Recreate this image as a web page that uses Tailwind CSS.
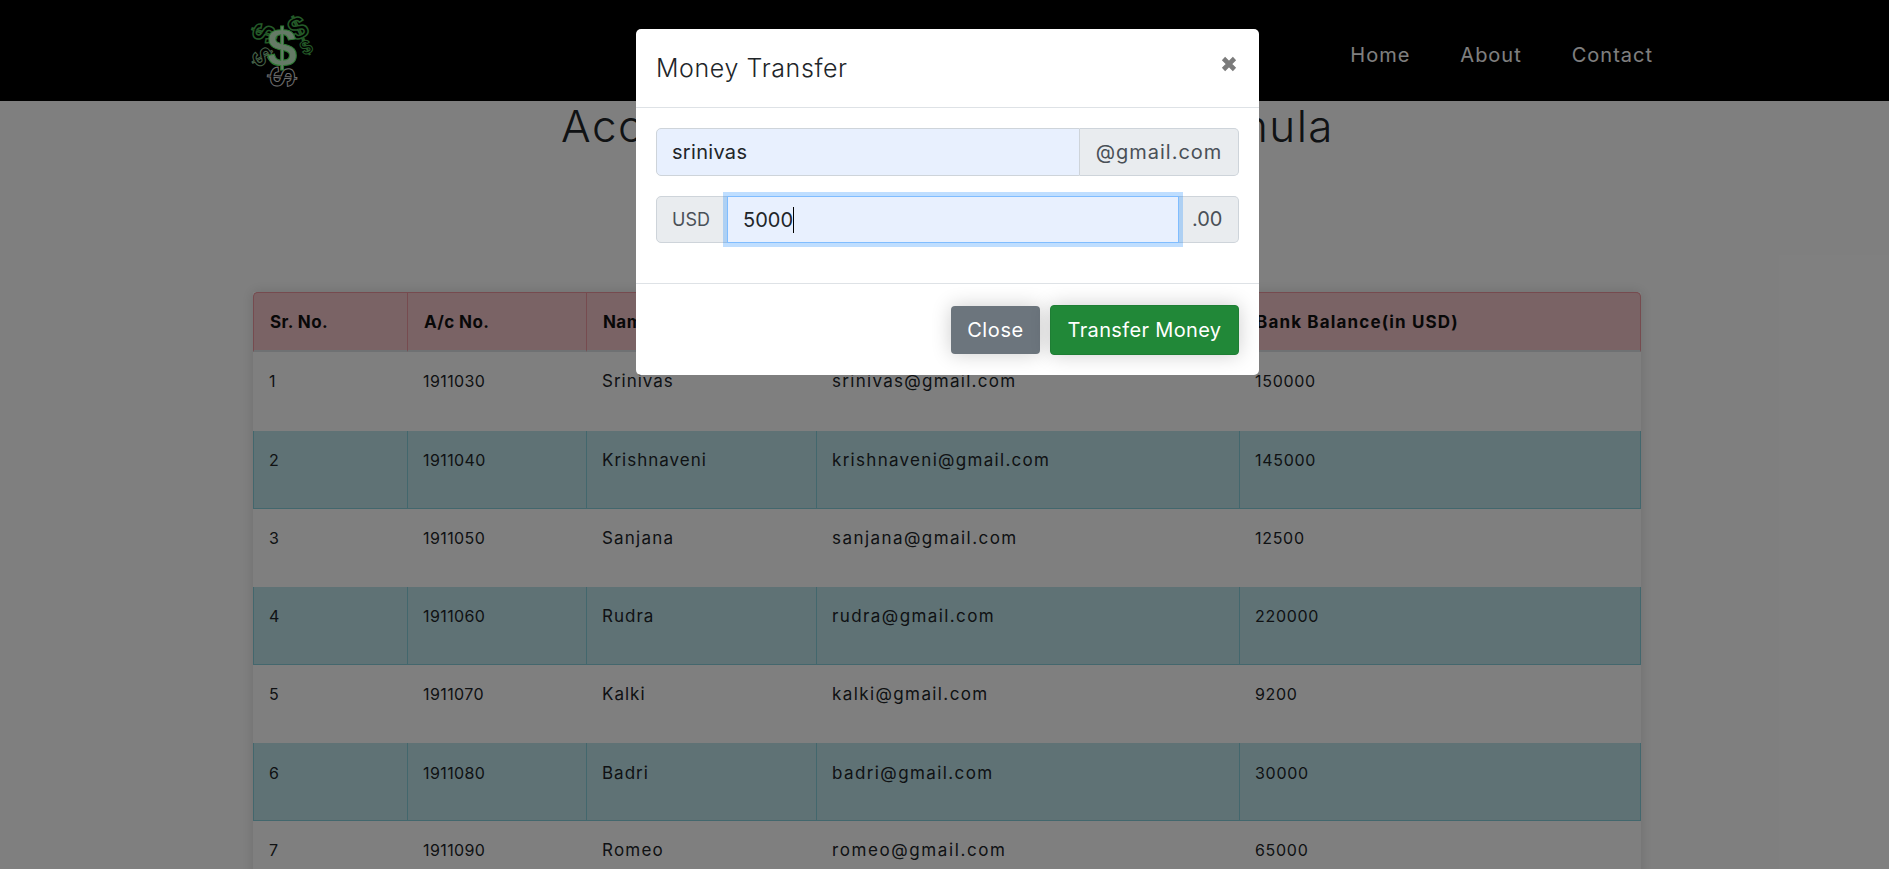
<!DOCTYPE html>
<html><head><meta charset="utf-8"><script src="https://cdn.jsdelivr.net/npm/@tailwindcss/browser@4"></script></head>
<body class="relative h-[869px] overflow-hidden bg-white font-['Inter','Liberation_Sans',sans-serif] text-[#212529]">
<nav class="h-[101px] bg-black flex justify-between pl-[240px] pr-[236px]">
  <div class="relative w-[90px] h-[90px] mt-[5px] overflow-hidden font-['Liberation_Sans',sans-serif] font-bold">
    <span class="absolute left-[4px] top-[8px] w-10 h-10 flex items-center justify-center -rotate-70 text-[32px] text-transparent [-webkit-text-stroke:1.5px_#48b450]">$</span>
    <span class="absolute left-[38px] top-[3px] w-10 h-10 flex items-center justify-center -rotate-25 text-[32px] text-transparent [-webkit-text-stroke:1.5px_#48b450]">$</span>
    <span class="absolute left-[46px] top-[22px] w-10 h-10 flex items-center justify-center -rotate-25 text-[20px] text-transparent [-webkit-text-stroke:1px_#48b450]">$</span>
    <span class="absolute left-[2px] top-[32px] w-10 h-10 flex items-center justify-center rotate-60 text-[28px] text-transparent [-webkit-text-stroke:1px_#90c894]">$</span>
    <span class="absolute left-[22px] top-[52px] w-10 h-10 flex items-center justify-center rotate-95 text-[36px] text-transparent [-webkit-text-stroke:1px_#dddddd]">$</span>
    <span class="absolute left-[22px] top-[22px] w-10 h-10 flex items-center justify-center text-[54px] text-[#c8f5cc] [-webkit-text-stroke:1px_#5af466]">$</span>
  </div>
  <ul class="flex gap-[50px] pt-[41px] text-[20px] leading-[28px] tracking-[1px] text-white">
    <li>Home</li><li>About</li><li>Contact</li>
  </ul>
</nav>
<main class="px-[253px]">
  <h1 class="text-center pl-[6px] text-[44px] leading-[50px] font-light tracking-[1.4px] mb-[141px]">Accounts Details of Money Formula</h1>
  <table class="w-[1388px] table-fixed border-separate border-spacing-0 text-[17px] shadow-[0_0_12px_rgba(0,0,0,0.15)]">
    <colgroup><col class="w-[154px]"><col class="w-[179px]"><col class="w-[230px]"><col class="w-[423px]"><col></colgroup>
    <thead class="bg-[#f5c6cb] text-left font-bold text-[#111]">
      <tr class="h-[60px]">
        <th class="border-t border-l border-b-2 border-[#ed969e] border-b-[#dee2e6] pl-4 pt-[2px] tracking-[0.4px] rounded-tl-[5px]">Sr. No.</th>
        <th class="border-t border-l border-b-2 border-[#ed969e] border-b-[#dee2e6] pl-4 pt-[2px] tracking-[0.4px]">A/c No.</th>
        <th class="border-t border-l border-b-2 border-[#ed969e] border-b-[#dee2e6] pl-4 pt-[2px] tracking-[0.4px]">Name</th>
        <th class="border-t border-l border-b-2 border-[#ed969e] border-b-[#dee2e6] pl-4 pt-[2px] tracking-[0.4px]">Email</th>
        <th class="border-t border-x border-b-2 border-[#ed969e] border-b-[#dee2e6] pl-4 pt-[2px] tracking-[1.15px] rounded-tr-[5px]">Bank Balance(in USD)</th>
      </tr>
    </thead>
    <tbody class="align-top leading-6">
      <tr class="h-[79px] bg-white"><td class="pt-[17px] pl-4 text-[16px]">1</td><td class="pt-[17px] pl-4 text-[16px] tracking-[0.4px]">1911030</td><td class="pt-[17px] pl-4 tracking-[1px]">Srinivas</td><td class="pt-[17px] pl-4 tracking-[1.3px]">srinivas@gmail.com</td><td class="pt-[17px] pl-4 text-[16px] tracking-[0.7px]">150000</td></tr>
      <tr class="h-[78px] bg-[#bee5eb]"><td class="pt-[17px] pl-[15px] text-[16px] border-l border-b border-[#86cfda]">2</td><td class="pt-[17px] pl-[15px] text-[16px] tracking-[0.4px] border-l border-b border-[#86cfda]">1911040</td><td class="pt-[17px] pl-[15px] tracking-[1px] border-l border-b border-[#86cfda]">Krishnaveni</td><td class="pt-[17px] pl-[15px] tracking-[1.3px] border-l border-b border-[#86cfda]">krishnaveni@gmail.com</td><td class="pt-[17px] pl-[15px] text-[16px] tracking-[0.7px] border-x border-b border-[#86cfda]">145000</td></tr>
      <tr class="h-[78px] bg-white"><td class="pt-[17px] pl-4 text-[16px]">3</td><td class="pt-[17px] pl-4 text-[16px] tracking-[0.4px]">1911050</td><td class="pt-[17px] pl-4 tracking-[1.2px]">Sanjana</td><td class="pt-[17px] pl-4 tracking-[1.45px]">sanjana@gmail.com</td><td class="pt-[17px] pl-4 text-[16px] tracking-[0.7px]">12500</td></tr>
      <tr class="h-[78px] bg-[#bee5eb]"><td class="pt-[17px] pl-[15px] text-[16px] border-l border-b border-[#86cfda]">4</td><td class="pt-[17px] pl-[15px] text-[16px] tracking-[0.4px] border-l border-b border-[#86cfda]">1911060</td><td class="pt-[17px] pl-[15px] tracking-[1px] border-l border-b border-[#86cfda]">Rudra</td><td class="pt-[17px] pl-[15px] tracking-[1.4px] border-l border-b border-[#86cfda]">rudra@gmail.com</td><td class="pt-[17px] pl-[15px] text-[16px] tracking-[0.7px] border-x border-b border-[#86cfda]">220000</td></tr>
      <tr class="h-[78px] bg-white"><td class="pt-[17px] pl-4 text-[16px]">5</td><td class="pt-[17px] pl-4 text-[16px] tracking-[0.4px]">1911070</td><td class="pt-[17px] pl-4 tracking-[1px]">Kalki</td><td class="pt-[17px] pl-4 tracking-[1.4px]">kalki@gmail.com</td><td class="pt-[17px] pl-4 text-[16px] tracking-[0.7px]">9200</td></tr>
      <tr class="h-[78px] bg-[#bee5eb]"><td class="pt-[18px] pl-[15px] text-[16px] border-l border-b border-[#86cfda]">6</td><td class="pt-[18px] pl-[15px] text-[16px] tracking-[0.4px] border-l border-b border-[#86cfda]">1911080</td><td class="pt-[18px] pl-[15px] tracking-[1px] border-l border-b border-[#86cfda]">Badri</td><td class="pt-[18px] pl-[15px] tracking-[1.4px] border-l border-b border-[#86cfda]">badri@gmail.com</td><td class="pt-[18px] pl-[15px] text-[16px] tracking-[0.7px] border-x border-b border-[#86cfda]">30000</td></tr>
      <tr class="h-[79px] bg-white"><td class="pt-[17px] pl-4 text-[16px]">7</td><td class="pt-[17px] pl-4 text-[16px] tracking-[0.4px]">1911090</td><td class="pt-[17px] pl-4 tracking-[1.2px]">Romeo</td><td class="pt-[17px] pl-4 tracking-[1.6px]">romeo@gmail.com</td><td class="pt-[17px] pl-4 text-[16px] tracking-[0.7px]">65000</td></tr>
    </tbody>
  </table>
</main>
<div class="absolute inset-0 bg-black/50"></div>
<div class="absolute left-[636px] top-[29px] w-[623px] h-[346px] bg-white rounded-[5px] flex flex-col">
  <div class="h-[79px] border-b border-[#dee2e6] flex justify-between pl-5 pr-[20px] shrink-0">
    <h5 class="pt-[21px] text-[25px] leading-[36px] font-light tracking-[0.6px]">Money Transfer</h5>
    <svg class="mt-[27px] mr-[2px] w-[16px] h-[16px] text-[#7b7b7b]" viewBox="0 0 16 16" fill="none" stroke="currentColor" stroke-width="4.6"><path d="M2.5 2.5 13.5 13.5M13.5 2.5 2.5 13.5"/></svg>
  </div>
  <div class="h-[176px] border-b border-[#dee2e6] px-5 pt-5 shrink-0 text-[20px]">
    <div class="flex h-[48px] mb-5">
      <div class="flex-1 bg-[#e8f0fe] border border-[#ced4da] rounded-l-[5px] pl-[15px] leading-[46px] tracking-[0.3px]">srinivas</div>
      <div class="w-[159px] bg-[#e9ecef] border border-l-0 border-[#ced4da] rounded-r-[5px] text-center leading-[46px] tracking-[1px] text-[#495057]">@gmail.com</div>
    </div>
    <div class="flex h-[47px]">
      <div class="w-[72px] bg-[#e9ecef] border border-[#ced4da] rounded-l-[5px] pl-[15px] leading-[45px] text-[18px] text-[#495057]">USD</div>
      <div class="w-[452px] -ml-px relative z-10 bg-[#e8f0fe] border border-[#80bdff] shadow-[0_0_0_4px_rgba(0,123,255,0.25)] pl-[15px] flex items-center"><span>5000</span><span class="w-px h-[26px] bg-black"></span></div>
      <div class="flex-1 bg-[#e9ecef] border border-l-0 border-[#ced4da] rounded-r-[5px] pl-[13px] leading-[45px] text-[#495057]">.00</div>
    </div>
  </div>
  <div class="flex justify-end items-center gap-[10px] px-[20px] flex-1 text-[20px]">
    <button class="h-[48px] w-[89px] bg-[#6c757d] text-white rounded-[4px] tracking-[0.6px] shadow-[0_0_20px_rgba(0,0,0,0.2)]">Close</button>
    <button class="h-[50px] w-[189px] bg-[#218838] border border-[#1e7e34] text-white rounded-[4px] tracking-[0.35px] shadow-[0_0_20px_rgba(0,0,0,0.2)]">Transfer Money</button>
  </div>
</div>
</body></html>
